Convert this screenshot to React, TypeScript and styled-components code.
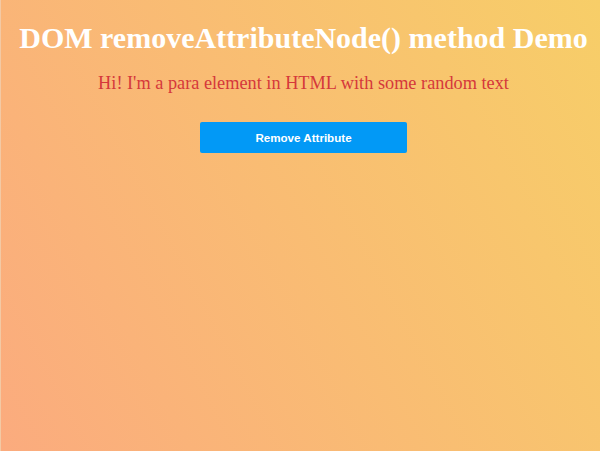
import React from 'react';
import styled, { createGlobalStyle } from 'styled-components';

const GlobalStyle = createGlobalStyle`
  html, body {
    margin: 0;
    padding: 0;
    height: 100%;
  }
  #root {
    height: 100%;
  }
`;

export default function App() {
  return (
    <>
      <GlobalStyle />
      <UIPage>
        <UITitle>DOM removeAttributeNode() method Demo</UITitle>
        <UIPara>Hi! I'm a para element in HTML with some random text</UIPara>
        <UIButton type="button">Remove Attribute</UIButton>
      </UIPage>
    </>
  );
}

const UIPage = styled.div`
  box-sizing: border-box;
  min-height: 451px;
  padding: 21px 2px 0 8px;
  display: flex;
  flex-direction: column;
  align-items: center;
  border-left: 1px solid #f3c9a4;
  background-image: linear-gradient(62deg, #fbab7e 0%, #f7ce68 100%);
  font-family: 'Liberation Serif', 'Times New Roman', serif;
`;

const UITitle = styled.h1`
  margin: 0;
  font-size: 30px;
  font-weight: bold;
  color: #fff;
  text-align: center;
  white-space: nowrap;
`;

const UIPara = styled.p`
  margin: 18px 0 0;
  font-size: 18.3px;
  color: #d5383b;
  text-align: center;
`;

const UIButton = styled.button`
  margin-top: 28px;
  width: 207px;
  height: 31px;
  border: none;
  border-radius: 2px;
  background: #0299f6;
  color: #fff;
  font-family: 'Liberation Sans', Arial, sans-serif;
  font-size: 11.6px;
  font-weight: bold;
  cursor: pointer;
`;
